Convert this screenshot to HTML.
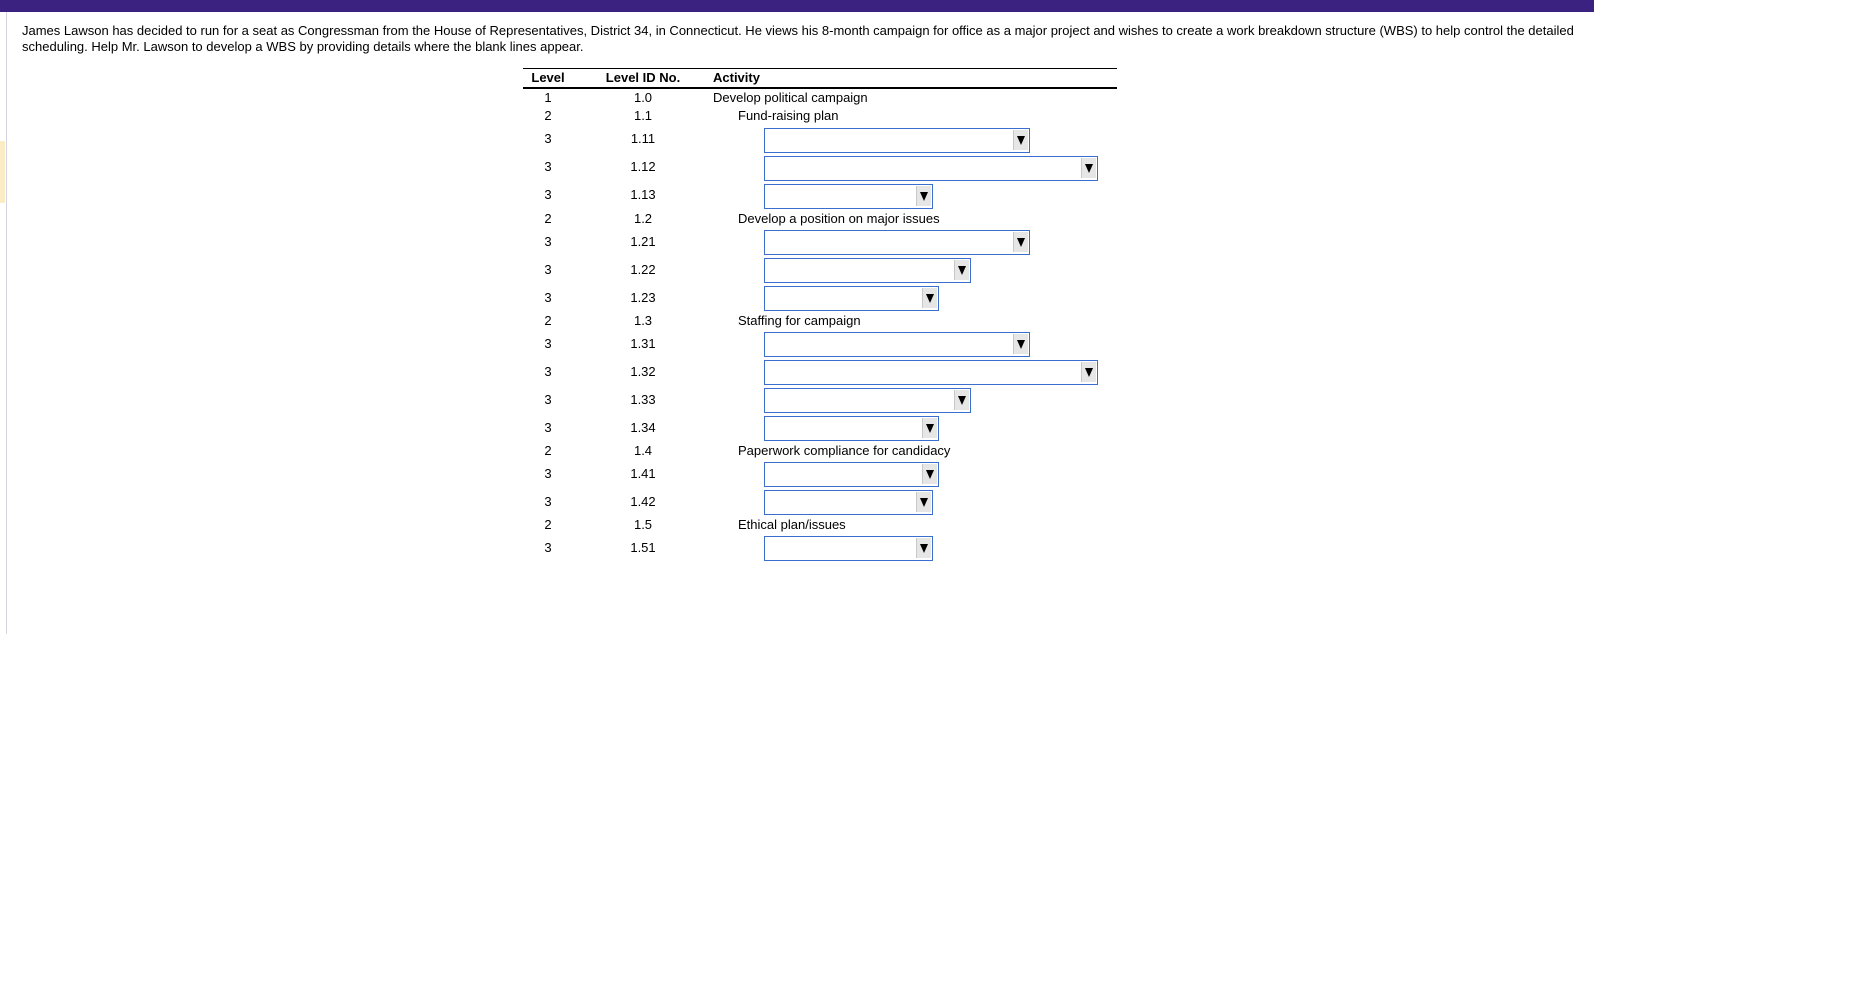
<!DOCTYPE html>
<html><head><meta charset="utf-8"><style>
body{margin:0;width:1874px;height:1008px;background:#fff;position:relative;overflow:hidden;font-family:"Liberation Sans",Arial,sans-serif;color:#000}
.bar{position:absolute;left:0;top:0;width:1594px;height:12px;background:#3b2280}
.vl{position:absolute;left:6px;top:12px;width:1px;height:622px;background:#d3d6e2}
.yl{position:absolute;left:0;top:141px;width:5px;height:62px;background:#faecc4}
.intro{position:absolute;left:22px;top:23px;font-size:13px;line-height:16px;white-space:nowrap}
.t{position:absolute;font-size:13px;line-height:16px;white-space:nowrap;margin-top:1px}
.c{transform:translateX(-50%)}
.h{font-weight:bold}
.box{position:absolute;left:764px;height:23px;border:1px solid #3a6fd0;background:#fff}
.btn{position:absolute;right:1px;top:1px;width:14px;height:20px;background:#e6e6e6;border-left:1px solid #c8c8c8}
.btn:after{content:"";position:absolute;left:3px;top:6px;border-left:4px solid transparent;border-right:4px solid transparent;border-top:9px solid #000}
.line{position:absolute;left:523px;width:594px;background:#000}
</style></head><body>
<div class="bar"></div><div class="vl"></div><div class="yl"></div>
<div class="intro">James Lawson has decided to run for a seat as Congressman from the House of Representatives, District 34, in Connecticut. He views his 8-month campaign for office as a major project and wishes to create a work breakdown structure (WBS) to help control the detailed<br>scheduling. Help Mr. Lawson to develop a WBS by providing details where the blank lines appear.</div>
<div class="line" style="top:68px;height:1px"></div>
<div class="line" style="top:87px;height:2px"></div>
<div class="t h c" style="left:548px;top:69px">Level</div>
<div class="t h c" style="left:643px;top:69px">Level ID No.</div>
<div class="t h" style="left:713px;top:69px">Activity</div>

<div class="t c" style="left:548px;top:89px">1</div><div class="t c" style="left:643px;top:89px">1.0</div><div class="t" style="left:713px;top:89px">Develop political campaign</div>
<div class="t c" style="left:548px;top:107px">2</div><div class="t c" style="left:643px;top:107px">1.1</div><div class="t" style="left:738px;top:107px">Fund-raising plan</div>
<div class="t c" style="left:548px;top:130px">3</div><div class="t c" style="left:643px;top:130px">1.11</div><div class="box" style="top:128px;width:264px"><div class="btn"></div></div>
<div class="t c" style="left:548px;top:158px">3</div><div class="t c" style="left:643px;top:158px">1.12</div><div class="box" style="top:156px;width:332px"><div class="btn"></div></div>
<div class="t c" style="left:548px;top:186px">3</div><div class="t c" style="left:643px;top:186px">1.13</div><div class="box" style="top:184px;width:167px"><div class="btn"></div></div>
<div class="t c" style="left:548px;top:210px">2</div><div class="t c" style="left:643px;top:210px">1.2</div><div class="t" style="left:738px;top:210px">Develop a position on major issues</div>
<div class="t c" style="left:548px;top:233px">3</div><div class="t c" style="left:643px;top:233px">1.21</div><div class="box" style="top:230px;width:264px"><div class="btn"></div></div>
<div class="t c" style="left:548px;top:261px">3</div><div class="t c" style="left:643px;top:261px">1.22</div><div class="box" style="top:258px;width:205px"><div class="btn"></div></div>
<div class="t c" style="left:548px;top:289px">3</div><div class="t c" style="left:643px;top:289px">1.23</div><div class="box" style="top:286px;width:173px"><div class="btn"></div></div>
<div class="t c" style="left:548px;top:312px">2</div><div class="t c" style="left:643px;top:312px">1.3</div><div class="t" style="left:738px;top:312px">Staffing for campaign</div>
<div class="t c" style="left:548px;top:335px">3</div><div class="t c" style="left:643px;top:335px">1.31</div><div class="box" style="top:332px;width:264px"><div class="btn"></div></div>
<div class="t c" style="left:548px;top:363px">3</div><div class="t c" style="left:643px;top:363px">1.32</div><div class="box" style="top:360px;width:332px"><div class="btn"></div></div>
<div class="t c" style="left:548px;top:391px">3</div><div class="t c" style="left:643px;top:391px">1.33</div><div class="box" style="top:388px;width:205px"><div class="btn"></div></div>
<div class="t c" style="left:548px;top:419px">3</div><div class="t c" style="left:643px;top:419px">1.34</div><div class="box" style="top:416px;width:173px"><div class="btn"></div></div>
<div class="t c" style="left:548px;top:442px">2</div><div class="t c" style="left:643px;top:442px">1.4</div><div class="t" style="left:738px;top:442px">Paperwork compliance for candidacy</div>
<div class="t c" style="left:548px;top:465px">3</div><div class="t c" style="left:643px;top:465px">1.41</div><div class="box" style="top:462px;width:173px"><div class="btn"></div></div>
<div class="t c" style="left:548px;top:493px">3</div><div class="t c" style="left:643px;top:493px">1.42</div><div class="box" style="top:490px;width:167px"><div class="btn"></div></div>
<div class="t c" style="left:548px;top:516px">2</div><div class="t c" style="left:643px;top:516px">1.5</div><div class="t" style="left:738px;top:516px">Ethical plan/issues</div>
<div class="t c" style="left:548px;top:539px">3</div><div class="t c" style="left:643px;top:539px">1.51</div><div class="box" style="top:536px;width:167px"><div class="btn"></div></div>
</body></html>
